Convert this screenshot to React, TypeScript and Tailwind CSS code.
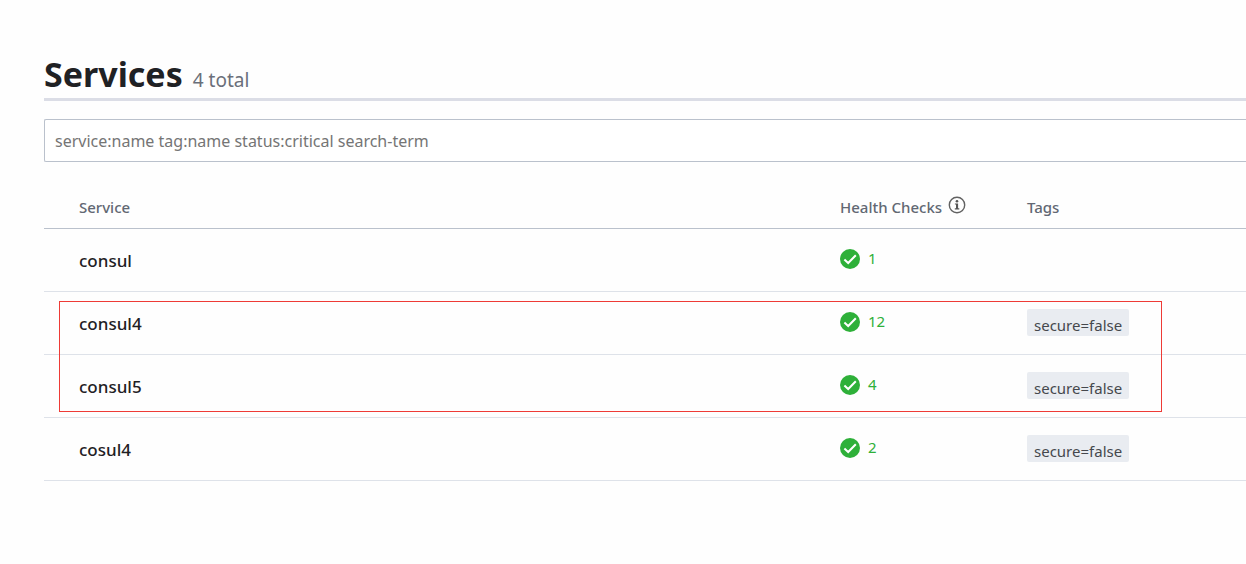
import React from "react";

type Service = { name: string; passing: number; tags: string[] };

const services: Service[] = [
  { name: "consul", passing: 1, tags: [] },
  { name: "consul4", passing: 12, tags: ["secure=false"] },
  { name: "consul5", passing: 4, tags: ["secure=false"] },
  { name: "cosul4", passing: 2, tags: ["secure=false"] },
];

function CheckIcon() {
  return (
    <svg viewBox="0 0 20 20" className="h-5 w-5" aria-hidden="true">
      <circle cx="10" cy="10" r="10" fill="#2eb039" />
      <path d="M4.4 10.4 8.2 14 15.8 6.2" fill="none" stroke="#fff" strokeWidth="2" />
    </svg>
  );
}

function InfoIcon() {
  return (
    <svg viewBox="0 0 18 18" className="mb-1 h-[18px] w-[18px]" aria-hidden="true">
      <circle cx="9" cy="9" r="7.7" fill="none" stroke="#626262" strokeWidth="1.4" />
      <circle cx="9" cy="5.3" r="1.3" fill="#555" />
      <path d="M6.9 7.5h3.2v4.8h1.2v1.1H6.8v-1.1H8V8.6H6.9z" fill="#555" />
    </svg>
  );
}

export default function App() {
  return (
    <main className="min-h-screen bg-[#fefefe] pt-[53px] pl-11 font-['Noto_Sans','Open_Sans',sans-serif] text-[#1f2124]">
      <header className="flex h-12 items-baseline gap-2.5 border-b-3 border-[#dbdde6]">
        <h1 className="text-[34px] leading-[43px] font-bold">Services</h1>
        <span className="text-[19px] text-[#6a6f7a]">4 total</span>
      </header>

      <input
        type="search"
        aria-label="Search services"
        placeholder="service:name tag:name status:critical search-term"
        className="mt-[18px] block h-[43px] w-full rounded-l-xs border border-r-0 border-[#bac1cc] bg-white px-2.5 text-[16px] placeholder:text-[#757575]"
      />

      <div className="relative mt-6">
        <table className="w-full table-fixed border-collapse text-left">
          <colgroup>
            <col />
            <col className="w-[187px]" />
            <col className="w-[219px]" />
          </colgroup>
          <thead>
            <tr className="h-[42px] border-b border-[#bac1cc] text-[15px] text-[#626873]">
              <th className="pl-[35px] font-medium">Service</th>
              <th className="font-medium">
                <span className="flex items-center gap-1.5">
                  Health Checks
                  <InfoIcon />
                </span>
              </th>
              <th className="font-medium">Tags</th>
            </tr>
          </thead>
          <tbody>
            {services.map((service) => (
              <tr key={service.name} className="h-[63px] border-b border-[#dee2e9]">
                <td className="pt-0.5 pl-[35px] text-[17px] font-medium">
                  <a href={"#" + service.name}>{service.name}</a>
                </td>
                <td className="pb-0.5">
                  <span className="flex items-center gap-2 text-[15px] text-[#2eb039]">
                    <CheckIcon />
                    {service.passing}
                  </span>
                </td>
                <td>
                  {service.tags.map((tag) => (
                    <span
                      key={tag}
                      className="inline-block h-[27px] rounded-xs bg-[#e9ecf1] px-[7px] pt-1 text-[15px] leading-6 text-[#45484d]"
                    >
                      {tag}
                    </span>
                  ))}
                </td>
              </tr>
            ))}
          </tbody>
        </table>
        <div className="pointer-events-none absolute top-[115px] right-[84px] left-[15px] h-[111px] border border-[#ee3b36]" />
      </div>
    </main>
  );
}
